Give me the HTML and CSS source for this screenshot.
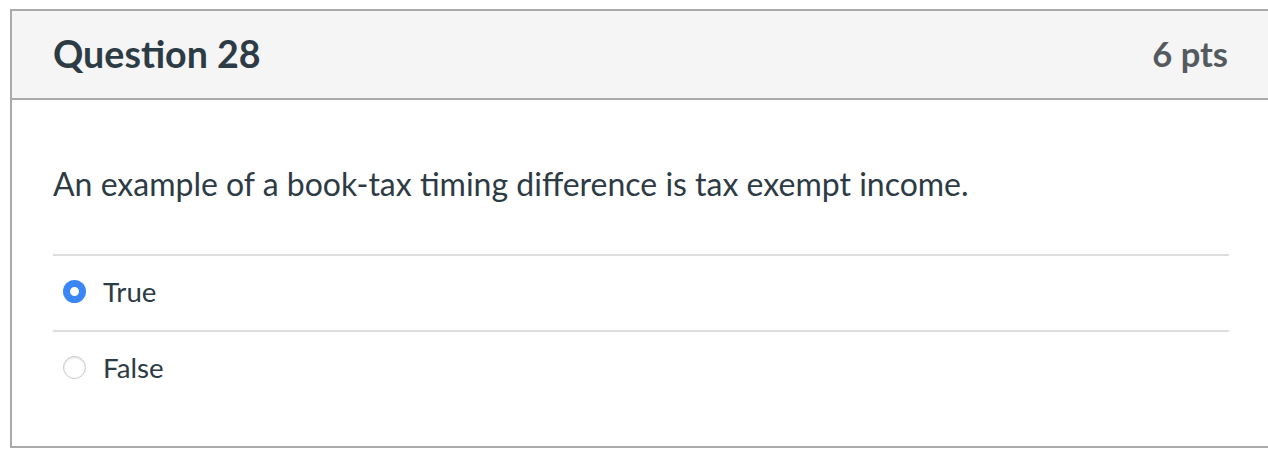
FILE: index.html
```html
<!DOCTYPE html>
<html>
<head>
<meta charset="utf-8">
<link rel="stylesheet" href="styles.css">
</head>
<body>
<div class="question">
  <div class="q-header">
    <h2 class="q-title">Question 28</h2>
    <div class="q-points">6 pts</div>
  </div>
  <div class="q-body">
    <p class="q-text">An example of a book-tax timing difference is tax exempt income.</p>
    <div class="answers">
      <label class="answer">
        <span class="radio checked"></span>
        <span class="answer-text">True</span>
      </label>
      <label class="answer">
        <span class="radio"></span>
        <span class="answer-text">False</span>
      </label>
    </div>
  </div>
</div>
</body>
</html>
```
FILE: styles.css
```css
html, body {
  margin: 0;
  padding: 0;
  background: #fff;
  overflow: hidden;
}
body {
  padding: 9px 0 0 10px;
  font-family: Lato, "Noto Sans", sans-serif;
  color: #2d3b45;
}
.question {
  width: 1280px;
  border: 2px solid #aaaaaa;
  border-right: none;
  box-sizing: border-box;
}
.q-header {
  background: #f5f5f5;
  border-bottom: 2px solid #aaaaaa;
  height: 89px;
  box-sizing: border-box;
  display: flex;
  align-items: center;
  justify-content: space-between;
  padding: 0 62px 2px 41px;
}
.q-title {
  margin: 0;
  font-size: 37.6px;
  font-weight: 700;
  color: #2d3b45;
}
.q-points {
  font-size: 34.5px;
  font-weight: 700;
  color: #555a5e;
}
.q-body {
  padding: 0 40px 0 41px;
  width: 1176px;
  height: 346px;
  box-sizing: content-box;
}
.q-text {
  margin: 0;
  padding-top: 64px;
  font-size: 32px;
  line-height: 40px;
  height: 90px;
  box-sizing: content-box;
  border-bottom: 2px solid #dddddd;
}
.answer {
  display: flex;
  align-items: center;
  height: 74px;
  box-sizing: border-box;
  padding-bottom: 4px;
  border-bottom: 2px solid #dddddd;
  padding-left: 10px;
}
.answer:first-child {
  height: 76px;
}
.answer:last-child {
  border-bottom: none;
}
.radio {
  width: 23px;
  height: 23px;
  border-radius: 50%;
  box-sizing: border-box;
  border: 1px solid #c8c8c8;
  background: #fff;
  box-shadow: inset 0 1px 2px rgba(0,0,0,0.12);
  margin-right: 17px;
  flex: none;
}
.radio.checked {
  border: 7px solid #3b86f7;
  box-shadow: none;
  background: #fff;
}
.answer-text {
  font-size: 27.7px;
  color: #2d3b45;
}
```
